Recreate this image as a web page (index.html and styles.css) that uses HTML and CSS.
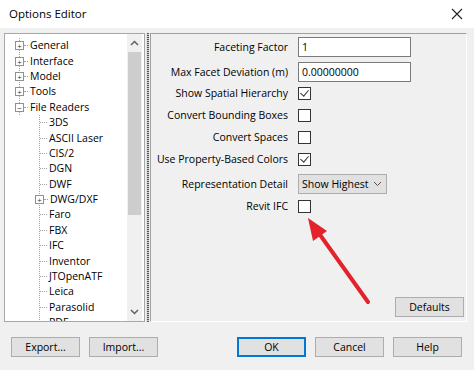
FILE: index.html
```html
<!DOCTYPE html>
<html lang="en">
<head>
    <meta charset="UTF-8">
    <title>Options Editor</title>
    <link rel="stylesheet" href="styles.css">
</head>
<body>
    <div class="window">
        <header class="titlebar">
            <span class="title">Options Editor</span>
            <svg class="close" width="12" height="12" viewBox="0 0 12 12">
                <path d="M1 1 L11 11 M11 1 L1 11" stroke="#222" stroke-width="1.1" fill="none"/>
            </svg>
        </header>

        <div class="main">
            <div class="tree">
                <div class="treeList">
                    <div class="roots">
                        <div class="row"><span class="toggle">+</span><span class="dash"></span><span class="label">General</span></div>
                        <div class="row"><span class="toggle">+</span><span class="dash"></span><span class="label">Interface</span></div>
                        <div class="row"><span class="toggle">+</span><span class="dash"></span><span class="label">Model</span></div>
                        <div class="row"><span class="toggle">+</span><span class="dash"></span><span class="label">Tools</span></div>
                        <div class="row"><span class="toggle">&minus;</span><span class="dash"></span><span class="label">File Readers</span></div>
                    </div>
                    <div class="children">
                        <div class="row"><span class="dash long"></span><span class="label">3DS</span></div>
                        <div class="row"><span class="dash long"></span><span class="label">ASCII Laser</span></div>
                        <div class="row"><span class="dash long"></span><span class="label">CIS/2</span></div>
                        <div class="row"><span class="dash long"></span><span class="label">DGN</span></div>
                        <div class="row"><span class="dash long"></span><span class="label">DWF</span></div>
                        <div class="row"><span class="toggle sub">+</span><span class="dash"></span><span class="label">DWG/DXF</span></div>
                        <div class="row"><span class="dash long"></span><span class="label">Faro</span></div>
                        <div class="row"><span class="dash long"></span><span class="label">FBX</span></div>
                        <div class="row"><span class="dash long"></span><span class="label">IFC</span></div>
                        <div class="row"><span class="dash long"></span><span class="label">Inventor</span></div>
                        <div class="row"><span class="dash long"></span><span class="label">JTOpenATF</span></div>
                        <div class="row"><span class="dash long"></span><span class="label">Leica</span></div>
                        <div class="row"><span class="dash long"></span><span class="label">Parasolid</span></div>
                        <div class="row"><span class="dash long"></span><span class="label">PDF</span></div>
                    </div>
                </div>
                <div class="scrollbar">
                    <svg class="arrow" width="9" height="6" viewBox="0 0 9 6"><path d="M1 5 L4.5 1.5 L8 5" stroke="#606060" stroke-width="1.5" fill="none"/></svg>
                    <div class="track"><div class="thumb"></div></div>
                    <svg class="arrow" width="9" height="6" viewBox="0 0 9 6"><path d="M1 1 L4.5 4.5 L8 1" stroke="#606060" stroke-width="1.5" fill="none"/></svg>
                </div>
            </div>

            <div class="splitter"></div>

            <div class="panel">
                <div class="form">
                    <label class="field">Faceting Factor</label>
                    <div class="control"><span class="textbox">1</span></div>

                    <label class="field second">Max Facet Deviation (m)</label>
                    <div class="control second"><span class="textbox">0.00000000</span></div>

                    <label class="field">Show Spatial Hierarchy</label>
                    <div class="control"><span class="check on"></span></div>

                    <label class="field">Convert Bounding Boxes</label>
                    <div class="control"><span class="check"></span></div>

                    <label class="field">Convert Spaces</label>
                    <div class="control"><span class="check"></span></div>

                    <label class="field">Use Property-Based Colors</label>
                    <div class="control"><span class="check on"></span></div>

                    <label class="field">Representation Detail</label>
                    <div class="control">
                        <span class="select">Show Highest
                            <svg width="9" height="6" viewBox="0 0 9 6"><path d="M1 1 L4.5 4.5 L8 1" stroke="#555" stroke-width="1" fill="none"/></svg>
                        </span>
                    </div>

                    <label class="field">Revit IFC</label>
                    <div class="control"><span class="check"></span></div>
                </div>
                <div class="panelActions">
                    <button type="button" class="btn">Defaults</button>
                </div>
            </div>
        </div>

        <footer class="footer">
            <div class="group">
                <button type="button" class="btn">Export...</button>
                <button type="button" class="btn">Import...</button>
            </div>
            <div class="group">
                <button type="button" class="btn default">OK</button>
                <button type="button" class="btn">Cancel</button>
                <button type="button" class="btn">Help</button>
            </div>
        </footer>

        <!-- annotation arrow pointing at Revit IFC -->
        <svg class="annotation" width="474" height="370" viewBox="0 0 474 370">
            <line x1="368" y1="302" x2="318" y2="232" stroke="#e3222c" stroke-width="4" stroke-linecap="round"/>
            <polygon points="308,218 327,231 313,241" fill="#e3222c"/>
        </svg>
    </div>
</body>
</html>
```

FILE: styles.css
```css
body {
    margin: 0;
    background: #f0f0f0;
    font-family: "Open Sans", "Noto Sans", sans-serif;
    font-size: 10.5px;
    color: #000;
}
.window {
    position: relative;
    width: 474px;
    height: 370px;
    background: #f0f0f0;
    overflow: hidden;
}
.titlebar {
    height: 28px;
    background: #fff;
    display: flex;
    align-items: center;
    justify-content: space-between;
    padding: 0 11px 0 9px;
}
.title {
    font-size: 11.5px;
    margin-top: -1px;
}
.main {
    display: flex;
    height: 289px;
    padding: 5px 0 0 4px;
}

/* tree */
.tree {
    width: 139px;
    border: 1px solid #a8a8a8;
    background: #fff;
    display: flex;
    overflow: hidden;
}
.treeList {
    flex: 1;
    padding-top: 4px;
    overflow: hidden;
}
.roots {
    margin-left: 14px;
    border-left: 1px dotted #a0a0a0;
}
.children {
    margin-left: 34px;
    border-left: 1px dotted #a0a0a0;
}
.row {
    display: flex;
    align-items: center;
    height: 15.4px;
    white-space: nowrap;
}
.toggle {
    width: 7px;
    height: 7px;
    margin-left: -5px;
    border: 1px solid #919191;
    background: #fff;
    font-size: 8px;
    line-height: 7px;
    text-align: center;
    color: #333;
    flex-shrink: 0;
}
.dash {
    width: 4px;
    border-top: 1px dotted #a0a0a0;
    margin-right: 2px;
}
.dash.long {
    width: 7px;
    margin-right: 2px;
}
.label {
    line-height: 15px;
}
.scrollbar {
    width: 15px;
    margin-right: 2px;
    display: flex;
    flex-direction: column;
    align-items: center;
    background: #f0f0f0;
}
.arrow {
    margin: 6px 0;
}
.track {
    flex: 1;
    width: 100%;
    padding: 0 1px;
    box-sizing: border-box;
}
.thumb {
    height: 163px;
    background: #cdcdcd;
}

.splitter {
    width: 2px;
    margin: 0 1px;
    background: repeating-linear-gradient(#555 0 1px, #ccc 1px 2px);
    border-left: 1px solid #e0e0e0;
}

/* options panel */
.panel {
    flex: 1;
    margin-right: 7px;
    border-top: 1px solid #a0a0a0;
    border-left: 1px solid #a0a0a0;
    border-right: 1px solid #fff;
    border-bottom: 1px solid #fff;
    display: flex;
    flex-direction: column;
    justify-content: space-between;
}
.form {
    display: grid;
    grid-template-columns: 137px auto;
    grid-template-rows: 20px 25px 22px 22px 22px 22px 28px 16px;
    column-gap: 10px;
    padding-top: 3px;
}
.field {
    text-align: right;
    display: flex;
    align-items: center;
    justify-content: flex-end;
    white-space: nowrap;
}
.control {
    display: flex;
    align-items: center;
}
.second {
    padding-top: 5px;
}
.textbox {
    width: 108px;
    height: 18px;
    border: 1px solid #7a7a7a;
    background: #fff;
    padding-left: 3px;
    line-height: 18px;
}
.check {
    width: 11px;
    height: 11px;
    border: 1px solid #333;
    background: #fff;
    position: relative;
}
.check.on::after {
    content: "";
    position: absolute;
    left: 3px;
    top: 0;
    width: 4px;
    height: 7px;
    border-right: 1.3px solid #333;
    border-bottom: 1.3px solid #333;
    transform: rotate(40deg);
}
.select {
    width: 80px;
    height: 18px;
    border: 1px solid #adadad;
    background: #e1e1e1;
    display: flex;
    align-items: center;
    justify-content: space-between;
    padding: 0 4px 0 3px;
}
.panelActions {
    display: flex;
    justify-content: flex-end;
    padding: 0 2px 4px 0;
}
.btn {
    width: 69px;
    height: 20px;
    border: 1px solid #adadad;
    background: #e1e1e1;
    font-family: inherit;
    font-size: 10.5px;
    padding: 0;
    color: #000;
}
.btn.default {
    border-color: #0078d7;
    box-shadow: inset 0 0 0 1px #0078d7;
}
.footer {
    display: flex;
    justify-content: space-between;
    padding: 15px 12px 0 11px;
}
.group {
    display: flex;
    gap: 9px;
}
.annotation {
    position: absolute;
    left: 0;
    top: 0;
    pointer-events: none;
}
```
